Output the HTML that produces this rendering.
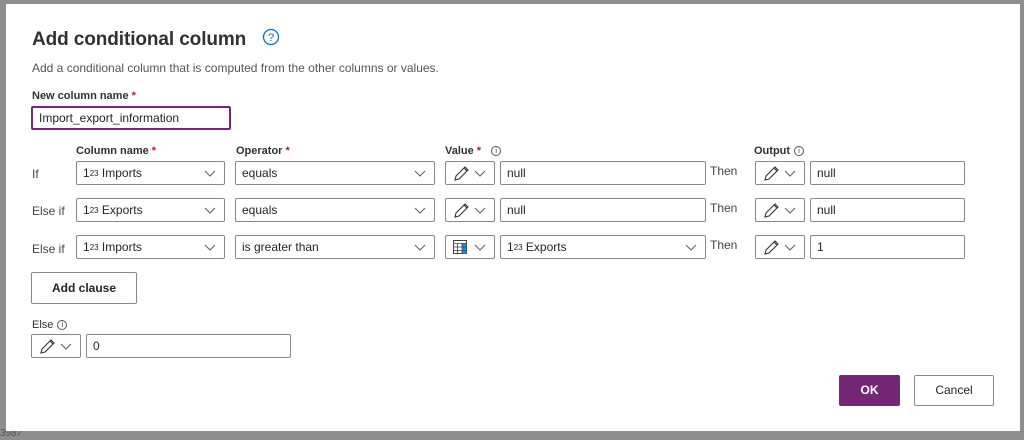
<!DOCTYPE html>
<html><head><meta charset="utf-8"><style>
*{box-sizing:border-box;margin:0;padding:0}
body{width:1024px;height:440px;background:#8e8e8e;position:relative;overflow:hidden;font-family:"Liberation Sans",sans-serif;color:#252423}
.dlg{position:absolute;left:6px;top:4px;width:1014px;height:427px;background:#fff}
.a{position:absolute}
.box{position:absolute;border:1px solid #8a8886;border-radius:2px;background:#fff;font-size:12px;display:flex;align-items:center;padding-left:6px;height:24px}
.lab{position:absolute;font-size:11px;font-weight:bold;color:#323130}
.st{color:#a4262c}
.chev{position:absolute;right:8px;top:6px}
.info{display:inline-block;width:10px;height:10px;border:1px solid #555;border-radius:50%;font-size:7px;text-align:center;line-height:9px;font-weight:normal;vertical-align:middle;margin-left:4px}
.side{position:absolute;font-size:12px;color:#444}
sup{font-size:8px;vertical-align:5px}sub{font-size:8px;vertical-align:-2px}
.bot{position:absolute;bottom:0;height:10px;font-size:10px;font-style:italic;color:#555}
</style></head><body>
<div class="bot" style="left:0;top:428px">3987</div>
<div class="dlg">
<div class="a" style="left:26px;top:25px;font-size:19px;font-weight:bold;color:#323130;letter-spacing:-0.1px">Add conditional column</div>
<svg class="a" style="left:256px;top:24px" width="18" height="18" viewBox="0 0 18 18"><circle cx="9" cy="9" r="7.5" fill="none" stroke="#0f6cbd" stroke-width="1.3"/><text x="9" y="13" font-size="11" text-anchor="middle" fill="#0f6cbd" font-family="Liberation Sans">?</text></svg>
<div class="a" style="left:26px;top:57px;font-size:12px;color:#555">Add a conditional column that is computed from the other columns or values.</div>
<div class="lab" style="left:26px;top:86px">New column name <span class="st">*</span></div>
<div class="box" style="left:25px;top:102px;width:200px;border:2px solid #742774">Import_export_information</div>

<div class="lab" style="left:70px;top:141px">Column name <span class="st">*</span></div>
<div class="lab" style="left:230px;top:141px">Operator <span class="st">*</span></div>
<div class="lab" style="left:439px;top:141px">Value <span class="st">*</span> &nbsp;<span class="info">i</span></div>
<div class="lab" style="left:748px;top:141px">Output<span class="info">i</span></div>

<div class="side" style="left:26px;top:163px">If</div>
<div class="side" style="left:26px;top:200px">Else if</div>
<div class="side" style="left:26px;top:238px">Else if</div>

<div class="box" style="left:70px;top:157px;width:149px">1<sup>2</sup><sub>3</sub>&nbsp;Imports<svg class="chev" width="12" height="10"><path d="M1 3l5 5 5-5" fill="none" stroke="#605e5c"/></svg></div>
<div class="box" style="left:229px;top:157px;width:200px">equals<svg class="chev" width="12" height="10"><path d="M1 3l5 5 5-5" fill="none" stroke="#605e5c"/></svg></div>
<div class="box" style="left:439px;top:157px;width:50px"><svg width="18" height="18"><path d="M3 16l1-4 9-9 3 3-9 9z M12 4l3 3" fill="none" stroke="#333" stroke-width="1.1"/></svg><svg class="chev" width="12" height="10"><path d="M1 3l5 5 5-5" fill="none" stroke="#605e5c"/></svg></div>
<div class="box" style="left:494px;top:157px;width:206px">null</div>
<div class="side" style="left:704px;top:160px">Then</div>
<div class="box" style="left:749px;top:157px;width:50px"><svg width="18" height="18"><path d="M3 16l1-4 9-9 3 3-9 9z M12 4l3 3" fill="none" stroke="#333" stroke-width="1.1"/></svg><svg class="chev" width="12" height="10"><path d="M1 3l5 5 5-5" fill="none" stroke="#605e5c"/></svg></div>
<div class="box" style="left:804px;top:157px;width:155px">null</div>

<div class="box" style="left:70px;top:194px;width:149px">1<sup>2</sup><sub>3</sub>&nbsp;Exports<svg class="chev" width="12" height="10"><path d="M1 3l5 5 5-5" fill="none" stroke="#605e5c"/></svg></div>
<div class="box" style="left:229px;top:194px;width:200px">equals<svg class="chev" width="12" height="10"><path d="M1 3l5 5 5-5" fill="none" stroke="#605e5c"/></svg></div>
<div class="box" style="left:439px;top:194px;width:50px"><svg width="18" height="18"><path d="M3 16l1-4 9-9 3 3-9 9z M12 4l3 3" fill="none" stroke="#333" stroke-width="1.1"/></svg><svg class="chev" width="12" height="10"><path d="M1 3l5 5 5-5" fill="none" stroke="#605e5c"/></svg></div>
<div class="box" style="left:494px;top:194px;width:206px">null</div>
<div class="side" style="left:704px;top:197px">Then</div>
<div class="box" style="left:749px;top:194px;width:50px"><svg width="18" height="18"><path d="M3 16l1-4 9-9 3 3-9 9z M12 4l3 3" fill="none" stroke="#333" stroke-width="1.1"/></svg><svg class="chev" width="12" height="10"><path d="M1 3l5 5 5-5" fill="none" stroke="#605e5c"/></svg></div>
<div class="box" style="left:804px;top:194px;width:155px">null</div>

<div class="box" style="left:70px;top:231px;width:149px">1<sup>2</sup><sub>3</sub>&nbsp;Imports<svg class="chev" width="12" height="10"><path d="M1 3l5 5 5-5" fill="none" stroke="#605e5c"/></svg></div>
<div class="box" style="left:229px;top:231px;width:200px">is greater than<svg class="chev" width="12" height="10"><path d="M1 3l5 5 5-5" fill="none" stroke="#605e5c"/></svg></div>
<div class="box" style="left:439px;top:231px;width:50px"><svg width="16" height="16"><rect x="1.5" y="1.5" width="13" height="13" fill="none" stroke="#444"/><rect x="10" y="4" width="4.5" height="10.5" fill="#2b88d8"/><path d="M1.5 4.5h13M1.5 8h13M1.5 11.5h13M5.5 4.5v10M10 4.5v10" stroke="#444" stroke-width="0.8"/></svg><svg class="chev" width="12" height="10"><path d="M1 3l5 5 5-5" fill="none" stroke="#605e5c"/></svg></div>
<div class="box" style="left:494px;top:231px;width:206px">1<sup>2</sup><sub>3</sub>&nbsp;Exports<svg class="chev" width="12" height="10"><path d="M1 3l5 5 5-5" fill="none" stroke="#605e5c"/></svg></div>
<div class="side" style="left:704px;top:234px">Then</div>
<div class="box" style="left:749px;top:231px;width:50px"><svg width="18" height="18"><path d="M3 16l1-4 9-9 3 3-9 9z M12 4l3 3" fill="none" stroke="#333" stroke-width="1.1"/></svg><svg class="chev" width="12" height="10"><path d="M1 3l5 5 5-5" fill="none" stroke="#605e5c"/></svg></div>
<div class="box" style="left:804px;top:231px;width:155px">1</div>

<div class="a" style="left:25px;top:268px;width:106px;height:32px;border:1px solid #8a8886;border-radius:2px;font-size:12px;font-weight:bold;text-align:center;line-height:30px">Add clause</div>
<div class="lab" style="left:26px;top:315px;font-weight:normal;color:#323130">Else<span class="info">i</span></div>
<div class="box" style="left:25px;top:330px;width:50px"><svg width="18" height="18"><path d="M3 16l1-4 9-9 3 3-9 9z M12 4l3 3" fill="none" stroke="#333" stroke-width="1.1"/></svg><svg class="chev" width="12" height="10"><path d="M1 3l5 5 5-5" fill="none" stroke="#605e5c"/></svg></div>
<div class="box" style="left:80px;top:330px;width:205px">0</div>
<div class="a" style="left:833px;top:371px;width:61px;height:31px;background:#742774;border-radius:2px;color:#fff;font-size:12px;font-weight:bold;text-align:center;line-height:31px">OK</div>
<div class="a" style="left:908px;top:371px;width:80px;height:31px;border:1px solid #8a8886;border-radius:2px;font-size:12px;text-align:center;line-height:29px">Cancel</div>
</div>
</body></html>
